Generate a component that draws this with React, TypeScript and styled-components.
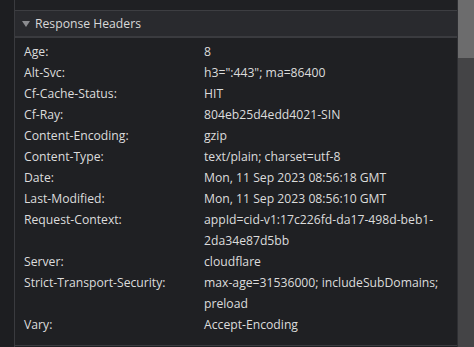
import React from "react";
import styled, { createGlobalStyle } from "styled-components";

const GlobalStyle = createGlobalStyle`
    html, body {
        margin: 0;
        padding: 0;
        background: #1e1f22;
    }
    body {
        font-family: "Open Sans", "Noto Sans", sans-serif;
        color: #dcdcdc;
    }
`;

const Frame = styled.div`
    display: grid;
    grid-template-columns: 15px 1fr 16px;
    width: 474px;
    height: 347px;
    overflow: hidden;
`;

const Gutter = styled.div`
    background: #1d1e21;
    border-right: 1px solid #3a3b3f;
`;

const Panel = styled.div`
    display: flex;
    flex-direction: column;
    background: #1f2023;
    border-right: 1px solid #2e2f33;
`;

const TopStrip = styled.div`
    height: 10px;
    border-bottom: 1px solid #3d3e42;
`;

const SectionHeader = styled.div`
    display: flex;
    align-items: center;
    gap: 5px;
    height: 25px;
    padding-left: 7px;
    background: #292a2e;
    border-bottom: 2px solid #3a3b3f;
    font-size: 12.2px;
    color: #d8d8d8;
`;

const Caret = styled.span`
    width: 0;
    height: 0;
    border-left: 4px solid transparent;
    border-right: 4px solid transparent;
    border-top: 6px solid #8b8c90;
    margin-top: 1px;
`;

const List = styled.dl`
    display: grid;
    grid-template-columns: 180px 1fr;
    margin: 0;
    padding: 3px 12px 10px 9px;
    font-size: 12.2px;
    line-height: 21px;
    border-bottom: 1px solid #3a3b3f;
`;

const Key = styled.dt`
    margin: 0;
`;

const Value = styled.dd`
    margin: 0;
    word-break: break-word;
`;

const Scrollbar = styled.div`
    display: flex;
    flex-direction: column;
    background: #444446;
`;

const Thumb = styled.div`
    height: 58px;
    background: #6c6c6d;
`;

const headers: [string, string][] = [
    ["Age", "8"],
    ["Alt-Svc", 'h3=":443"; ma=86400'],
    ["Cf-Cache-Status", "HIT"],
    ["Cf-Ray", "804eb25d4edd4021-SIN"],
    ["Content-Encoding", "gzip"],
    ["Content-Type", "text/plain; charset=utf-8"],
    ["Date", "Mon, 11 Sep 2023 08:56:18 GMT"],
    ["Last-Modified", "Mon, 11 Sep 2023 08:56:10 GMT"],
    ["Request-Context", "appId=cid-v1:17c226fd-da17-498d-beb1-2da34e87d5bb"],
    ["Server", "cloudflare"],
    ["Strict-Transport-Security", "max-age=31536000; includeSubDomains; preload"],
    ["Vary", "Accept-Encoding"],
];

const App: React.FC = () => {
    return (
        <>
            <GlobalStyle />
            <Frame>
                <Gutter />
                <Panel>
                    <TopStrip />
                    <SectionHeader>
                        <Caret />
                        Response Headers
                    </SectionHeader>
                    <List>
                        {headers.map(([name, value]) => (
                            <React.Fragment key={name}>
                                <Key>{name}:</Key>
                                <Value>{value}</Value>
                            </React.Fragment>
                        ))}
                    </List>
                </Panel>
                <Scrollbar>
                    <Thumb />
                </Scrollbar>
            </Frame>
        </>
    );
};

export default App;
